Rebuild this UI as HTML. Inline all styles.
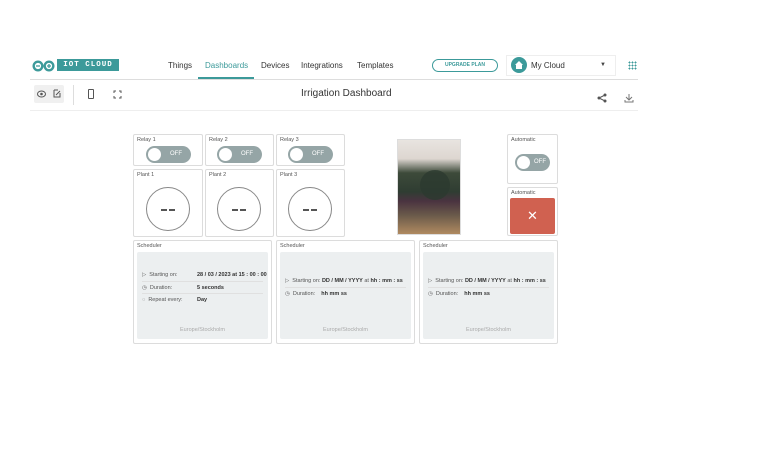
<!DOCTYPE html>
<html><head><meta charset="utf-8"><style>
*{box-sizing:border-box;margin:0;padding:0}
body{width:768px;height:451px;background:#fff;font-family:"Liberation Sans",sans-serif;position:relative;overflow:hidden;color:#333}
.a{position:absolute}
.nav{font-size:8px;color:#333;line-height:10px}
.card{position:absolute;background:#fff;border:1px solid #dcdcdc;border-radius:2px}
.lbl{position:absolute;left:3px;top:2px;font-size:5.5px;line-height:6px;color:#555}
.tog{position:absolute;width:45px;height:17px;border-radius:9px;background:#95a5a6}
.tog::before{content:"";position:absolute;left:2px;top:2px;width:13px;height:13px;border-radius:50%;background:#fff}
.tog span{position:absolute;right:9px;top:5px;line-height:7px;font-size:6px;color:#fff}
.circ{position:absolute;width:44px;height:44px;border-radius:50%;border:1px solid #888}
.circ::before,.circ::after{content:"";position:absolute;top:21px;width:6px;height:1.5px;background:#555}
.circ::before{left:14px}.circ::after{left:22px}
.sch{position:absolute;left:3px;top:11px;right:3px;bottom:4px;background:#eceff0;border-radius:2px;font-size:5.5px;color:#555}
.row{position:absolute;left:5px;right:5px;height:12px;line-height:12px;white-space:nowrap}
.row b{color:#333}
.tz{position:absolute;bottom:6px;width:100%;text-align:center;color:#aaa;font-size:5.5px}
</style></head><body>
<div class="a" style="left:32px;top:59px;width:24px;height:12px">
<svg width="24" height="12"><circle cx="6" cy="6" r="4.3" fill="none" stroke="#3c9a9a" stroke-width="2.4"/><circle cx="17" cy="6" r="4.3" fill="none" stroke="#3c9a9a" stroke-width="2.4"/><path d="M4 6h4M15 6h4M17 4v4" stroke="#3c9a9a" stroke-width="1.3"/></svg></div>
<div class="a" style="left:57px;top:59px;width:62px;height:12px;background:#3c9a9a;color:#fff;font-family:'Liberation Mono',monospace;font-weight:bold;font-size:7.5px;line-height:12px;text-align:center;letter-spacing:1px">IOT CLOUD</div>
<div class="a nav" style="left:168px;top:61px">Things</div>
<div class="a nav" style="left:205px;top:61px;color:#3c9a9a">Dashboards</div>
<div class="a" style="left:198px;top:77px;width:56px;height:2px;background:#3c9a9a"></div>
<div class="a nav" style="left:261px;top:61px">Devices</div>
<div class="a nav" style="left:301px;top:61px">Integrations</div>
<div class="a nav" style="left:357px;top:61px">Templates</div>
<div class="a" style="left:432px;top:59px;width:66px;height:13px;border:1px solid #3c9a9a;border-radius:7px;font-size:5px;font-weight:bold;color:#3c9a9a;text-align:center;line-height:11px">UPGRADE PLAN</div>
<div class="a" style="left:506px;top:55px;width:110px;height:21px;border:1px solid #eee"></div>
<div class="a" style="left:511px;top:57px;width:16px;height:16px;border-radius:50%;background:#3c9a9a"><svg style="position:absolute;left:4px;top:4px" width="8" height="8"><path d="M4 0L8 4H7V8H1V4H0Z" fill="#fff"/></svg></div>
<div class="a nav" style="left:531px;top:61px">My Cloud</div>
<div class="a" style="left:600px;top:62px;font-size:6px;line-height:6px;color:#444">▼</div>
<div class="a" style="left:628px;top:61px;width:9px;height:9px;background-image:radial-gradient(#3c9a9a 0.8px,transparent 1px);background-size:3px 3px"></div>
<div class="a" style="left:30px;top:79px;width:608px;height:1px;background:#ddd"></div>
<div class="a" style="left:34px;top:85px;width:30px;height:18px;background:#f0f0f0;border-radius:2px"></div>
<svg class="a" style="left:37px;top:90px" width="9" height="8"><ellipse cx="4.5" cy="4" rx="4" ry="3" fill="none" stroke="#555"/><circle cx="4.5" cy="4" r="1.3" fill="#555"/></svg>
<svg class="a" style="left:53px;top:89px" width="8" height="9"><path d="M1 1h4M1 1v7h6V4M3 6L7 2" stroke="#555" fill="none"/></svg>
<div class="a" style="left:73px;top:85px;width:1px;height:20px;background:#ddd"></div>
<div class="a" style="left:88px;top:89px;width:6px;height:10px;border:1.3px solid #555;border-radius:1px"></div>
<svg class="a" style="left:113px;top:90px" width="9" height="9"><path d="M1 3V1h2M6 1h2v2M8 6v2H6M3 8H1V6" stroke="#555" fill="none"/></svg>
<div class="a" style="left:301px;top:88px;font-size:10px;line-height:12px;color:#333">Irrigation Dashboard</div>
<div class="a" style="left:597px;top:90px"><svg width="10" height="10"><circle cx="8" cy="2" r="1.5" fill="#555"/><circle cx="2" cy="5" r="1.5" fill="#555"/><circle cx="8" cy="8" r="1.5" fill="#555"/><path d="M8 2L2 5L8 8" stroke="#555" fill="none"/></svg></div>
<div class="a" style="left:624px;top:90px"><svg width="10" height="10"><path d="M5 1v6M2 4l3 3 3-3M1 7v2h8V7" stroke="#777" fill="none"/></svg></div>
<div class="a" style="left:30px;top:110px;width:608px;height:1px;background:#eee"></div>
<div class="card" style="left:133px;top:134px;width:70px;height:32px"><div class="lbl">Relay 1</div><div class="tog" style="left:12px;top:11px"><span>OFF</span></div></div>
<div class="card" style="left:205px;top:134px;width:69px;height:32px"><div class="lbl">Relay 2</div><div class="tog" style="left:11px;top:11px"><span>OFF</span></div></div>
<div class="card" style="left:276px;top:134px;width:69px;height:32px"><div class="lbl">Relay 3</div><div class="tog" style="left:11px;top:11px"><span>OFF</span></div></div>
<div class="card" style="left:133px;top:169px;width:70px;height:68px"><div class="lbl">Plant 1</div><div class="circ" style="left:12px;top:17px"></div></div>
<div class="card" style="left:205px;top:169px;width:69px;height:68px"><div class="lbl">Plant 2</div><div class="circ" style="left:11px;top:17px"></div></div>
<div class="card" style="left:276px;top:169px;width:69px;height:68px"><div class="lbl">Plant 3</div><div class="circ" style="left:11px;top:17px"></div></div>
<div class="a" style="left:397px;top:139px;width:64px;height:96px;border:1px solid #ddd;background:linear-gradient(180deg,#e8e4e0 0%,#ddd6d0 20%,#3d4a3a 35%,#2f3d32 55%,#4a3340 65%,#6a5a4a 80%,#b08a60 100%)"></div>
<div class="a" style="left:420px;top:170px;width:30px;height:30px;border-radius:50%;background:#2c3a30;opacity:.8"></div>
<div class="card" style="left:507px;top:134px;width:51px;height:50px"><div class="lbl">Automatic</div><div class="tog" style="left:7px;top:19px;width:35px"><span style="right:4px">OFF</span></div></div>
<div class="card" style="left:507px;top:187px;width:51px;height:49px"><div class="lbl">Automatic</div><div class="a" style="left:2px;top:10px;width:45px;height:36px;background:#d06150;border-radius:2px;color:#fff;text-align:center;line-height:36px;font-size:13px">✕</div></div>
<div class="card" style="left:133px;top:240px;width:139px;height:104px"><div class="lbl">Scheduler</div><div class="sch">
<div class="row" style="top:17px">▷&nbsp; Starting on:<b style="position:absolute;left:55px">28 / 03 / 2023 at 15 : 00 : 00</b></div>
<div class="row" style="top:29px;border-top:1px solid #e0e0e0">◷&nbsp; Duration:<b style="position:absolute;left:55px">5 seconds</b></div>
<div class="row" style="top:41px;border-top:1px solid #e0e0e0">◌&nbsp; Repeat every:<b style="position:absolute;left:55px">Day</b></div>
<div class="tz">Europe/Stockholm</div></div></div>
<div class="card" style="left:276px;top:240px;width:139px;height:104px"><div class="lbl">Scheduler</div><div class="sch">
<div class="row" style="top:23px">▷&nbsp; Starting on: <b>DD / MM / YYYY</b> at <b>hh : mm : ss</b></div>
<div class="row" style="top:35px;border-top:1px solid #e0e0e0">◷&nbsp; Duration: &nbsp;&nbsp;&nbsp;<b>hh mm ss</b></div>
<div class="tz">Europe/Stockholm</div></div></div>
<div class="card" style="left:419px;top:240px;width:139px;height:104px"><div class="lbl">Scheduler</div><div class="sch">
<div class="row" style="top:23px">▷&nbsp; Starting on: <b>DD / MM / YYYY</b> at <b>hh : mm : ss</b></div>
<div class="row" style="top:35px;border-top:1px solid #e0e0e0">◷&nbsp; Duration: &nbsp;&nbsp;&nbsp;<b>hh mm ss</b></div>
<div class="tz">Europe/Stockholm</div></div></div>
</body></html>
